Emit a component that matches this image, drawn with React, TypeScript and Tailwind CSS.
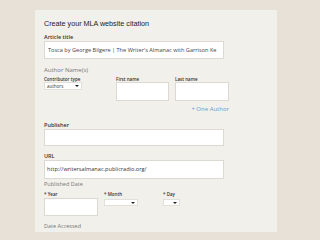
import React from "react";

const font = { fontFamily: '"Open Sans", "Liberation Sans", sans-serif' };

function Arrow() {
  return <span className="inline-block w-0 h-0 border-l-[2px] border-r-[2px] border-t-[2.5px] border-l-transparent border-r-transparent border-t-[#222]" />;
}

export default function App() {
  return (
    <div className="w-[320px] h-[240px] bg-[#e7e1d7] overflow-hidden" style={font}>
      <div className="ml-[35px] mt-[10px] w-[242px] h-[222px] bg-[#f2f0ea] pl-[9px] pt-[9px] flex flex-col text-[#333]">
        <div className="text-[7.2px] leading-[10px] text-[#222]" style={{ fontFamily: '"Liberation Sans", Arial, sans-serif' }}>
          Create your MLA website citation
        </div>
        <div className="mt-[5px] text-[5.5px] leading-[7px] font-semibold">Article title</div>
        <div className="w-[180px] h-[18px] bg-white border border-[#dcd9d2] flex items-center pl-[3px] text-[5.6px] text-[#444] whitespace-nowrap overflow-hidden">
          Tosca by George Bilgere | The Writer's Almanac with Garrison Ke
        </div>
        <div className="mt-[7px] text-[6px] leading-[8px] text-[#777]">Author Name(s)</div>
        <div className="mt-[3px] flex text-[4.5px] leading-[5px]">
          <div className="w-[72px] flex flex-col">
            <div className="font-semibold">Contributor type</div>
            <div className="mt-[0px] w-[38px] h-[8px] bg-white border border-[#e2e0da] flex items-center justify-between px-[2px] text-[4.5px]">
              <span>authors</span>
              <Arrow />
            </div>
          </div>
          <div className="w-[59px] flex flex-col">
            <div className="font-semibold">First name</div>
            <div className="w-[53px] h-[19px] bg-white border border-[#dcd9d2]" />
          </div>
          <div className="flex flex-col">
            <div className="font-semibold">Last name</div>
            <div className="w-[54px] h-[19px] bg-white border border-[#dcd9d2]" />
          </div>
        </div>
        <div className="mt-[4px] w-[185px] text-right text-[6px] leading-[8px] text-[#6b9bd0]">+ One Author</div>
        <div className="mt-[8px] text-[5.5px] leading-[8px] font-semibold">Publisher</div>
        <div className="w-[180px] h-[17px] bg-white border border-[#dcd9d2]" />
        <div className="mt-[7px] text-[5.5px] leading-[6px] font-semibold">URL</div>
        <div className="mt-[1px] w-[180px] h-[19px] bg-white border border-[#dcd9d2] flex items-center pl-[2px] text-[5.6px] text-[#333] whitespace-nowrap overflow-hidden">
          http://writersalmanac.publicradio.org/
        </div>
        <div className="mt-[1px] text-[5.5px] leading-[8px] text-[#777]">Published Date</div>
        <div className="mt-[3px] flex text-[4.5px] leading-[6px]">
          <div className="w-[60px] flex flex-col">
            <div className="font-semibold">* Year</div>
            <div className="mt-[1px] w-[54px] h-[18px] bg-white border border-[#dcd9d2]" />
          </div>
          <div className="w-[59px] flex flex-col">
            <div className="font-semibold">* Month</div>
            <div className="mt-[2px] w-[34px] h-[7px] bg-white border border-[#e2e0da] flex items-center justify-end pr-[2px]">
              <Arrow />
            </div>
          </div>
          <div className="flex flex-col">
            <div className="font-semibold">* Day</div>
            <div className="mt-[2px] w-[17px] h-[7px] bg-white border border-[#e2e0da] flex items-center justify-end pr-[2px]">
              <Arrow />
            </div>
          </div>
        </div>
        <div className="mt-[6px] text-[5.5px] leading-[8px] text-[#777]">Date Accessed</div>
      </div>
    </div>
  );
}
